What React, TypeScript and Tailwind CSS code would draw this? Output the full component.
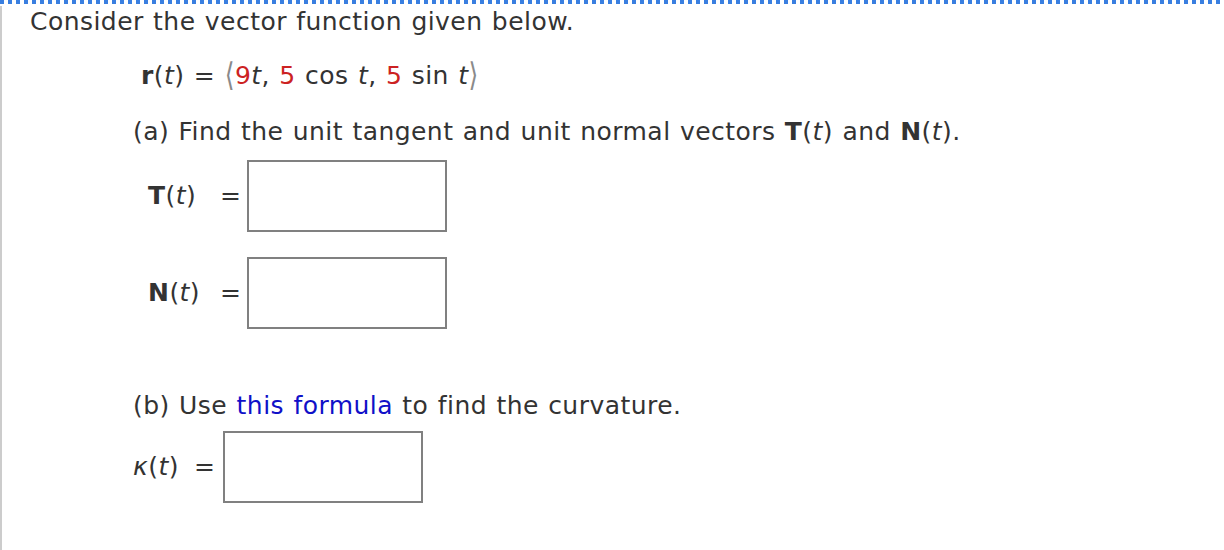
function Box() {
  return <div className="w-[200px] h-[72px] border-2 border-[#808080] bg-white" />;
}

function T() {
  return <i>t</i>;
}

function Bracket({ children }: { children: string }) {
  return <span className="inline-block text-[#8a8a8a] scale-y-[1.3] font-['DejaVu_Sans',sans-serif]">{children}</span>;
}

export default function App() {
  return (
    <div className="w-[1224px] h-[550px] bg-white text-[#333] font-['DejaVu_Sans',Verdana,sans-serif] text-[25px] tracking-[0.45px] [word-spacing:1px] leading-[32px]">
      <div className="h-[4px] bg-[repeating-linear-gradient(to_right,#3a7fe0_0_4px,transparent_4px_8px)]" />
      <div className="h-[546px] border-l-2 border-[#cccccc] pl-[28px]">
        <p className="mt-[2px]">Consider the vector function given below.</p>

        <p className="mt-[22px] ml-[111px]">
          <b>r</b>(<T />) = <Bracket>⟨</Bracket>
          <span className="text-[#cc2222]">9</span>
          <T />, <span className="text-[#cc2222]">5</span> cos <T />,{' '}
          <span className="text-[#cc2222]">5</span> sin <T />
          <Bracket>⟩</Bracket>
        </p>

        <p className="mt-[24px] ml-[103px]">
          (a) Find the unit tangent and unit normal vectors <b>T</b>(<T />) and <b>N</b>(<T />).
        </p>

        <div className="mt-[12px] ml-[118px] flex items-center">
          <span className="w-[72px]">
            <b>T</b>(<T />)
          </span>
          <span className="w-[27px]">=</span>
          <Box />
        </div>

        <div className="mt-[25px] ml-[118px] flex items-center">
          <span className="w-[72px]">
            <b>N</b>(<T />)
          </span>
          <span className="w-[27px]">=</span>
          <Box />
        </div>

        <p className="mt-[61px] ml-[103px]">
          (b) Use <a className="text-[#1010c8]">this formula</a> to find the curvature.
        </p>

        <div className="mt-[9px] ml-[103px] flex items-center">
          <span className="w-[61px]">
            <i>κ</i>(<T />)
          </span>
          <span className="w-[29px]">=</span>
          <Box />
        </div>
      </div>
    </div>
  );
}
